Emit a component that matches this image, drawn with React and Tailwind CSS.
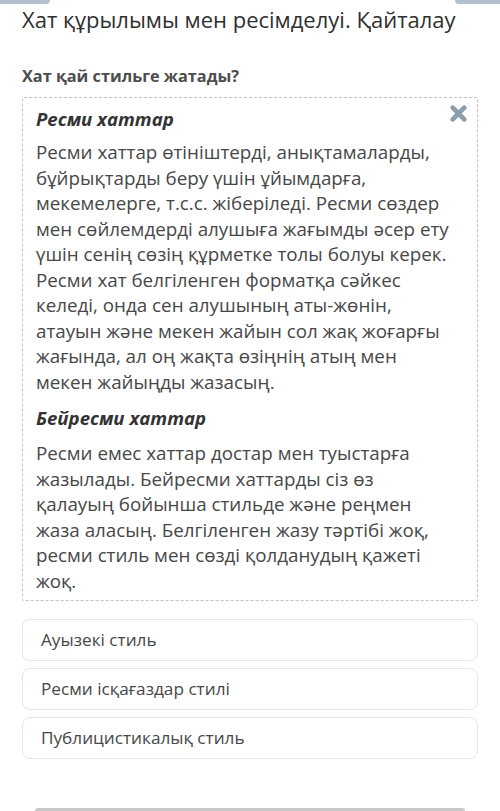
import React from 'react';

const formalLines = [
  'Ресми хаттар өтініштерді, анықтамаларды,',
  'бұйрықтарды беру үшін ұйымдарға,',
  'мекемелерге, т.с.с. жіберіледі. Ресми сөздер',
  'мен сөйлемдерді алушыға жағымды әсер ету',
  'үшін сенің сөзің құрметке толы болуы керек.',
  'Ресми хат белгіленген форматқа сәйкес',
  'келеді, онда сен алушының аты-жөнін,',
  'атауын және мекен жайын сол жақ жоғарғы',
  'жағында, ал оң жақта өзіңнің атың мен',
  'мекен жайыңды жазасың.',
];

const informalLines = [
  'Ресми емес хаттар достар мен туыстарға',
  'жазылады. Бейресми хаттарды сіз өз',
  'қалауың бойынша стильде және реңмен',
  'жаза аласың. Белгіленген жазу тәртібі жоқ,',
  'ресми стиль мен сөзді қолданудың қажеті',
  'жоқ.',
];

const options = ['Ауызекі стиль', 'Ресми ісқағаздар стилі', 'Публицистикалық стиль'];

const CloseIcon = () => (
  <svg width="19" height="19" viewBox="0 0 18 18" fill="none">
    <path d="M3.5 3.5 L14.5 14.5 M14.5 3.5 L3.5 14.5" stroke="#8c9dae" strokeWidth="4.5" strokeLinecap="round" />
  </svg>
);

const Lines = ({ lines, className }) => (
  <p className={className}>
    {lines.map((l, i) => (
      <span key={i} className="block whitespace-nowrap">
        {l}
      </span>
    ))}
  </p>
);

export default function App() {
  return (
    <div className="w-[500px] h-[811px] bg-white overflow-hidden flex flex-col text-[#333]" style={{ fontFamily: '"Open Sans", "Noto Sans", sans-serif' }}>
      <div className="flex justify-between h-[4px]">
        <div className="w-[50px] h-[4px] bg-[#b4c0cb] rounded-br-md" />
        <div className="w-[45px] h-[4px] bg-[#b4c0cb] rounded-bl-md" />
      </div>
      <h1 className="px-[22px] text-[22px] leading-[30px] text-[#2f2f2f]">Хат құрылымы мен ресімделуі. Қайталау</h1>

      <h2 className="px-[22px] mt-[31px] text-[16.3px] leading-[22px] font-bold text-[#4d4d4d]">Хат қай стильге жатады?</h2>

      <div className="mx-[22px] mt-[10px] h-[504px] border border-dashed border-[#c4c4c4] rounded-[2px] relative pl-[13px] pr-[12px] pt-[9px]">
        <div className="absolute right-[9px] top-[6px]">
          <CloseIcon />
        </div>
        <h3 className="text-[18.6px] leading-[24px] font-bold italic text-[#333]">Ресми хаттар</h3>
        <Lines lines={formalLines} className="mt-[9px] text-[18.8px] leading-[25.5px] text-[#474747]" />
        <h3 className="mt-[11px] text-[18.6px] leading-[24px] font-bold italic text-[#333]">Бейресми хаттар</h3>
        <Lines lines={informalLines} className="mt-[11px] text-[18.8px] leading-[25.5px] text-[#474747]" />
      </div>

      <div className="mx-[22px] mt-[18px] flex flex-col gap-[7px]">
        {options.map((o) => (
          <div key={o} className="h-[42px] border border-[#e6e6e6] rounded-[8px] flex items-center px-[18px] text-[17.2px] text-[#474747]">
            {o}
          </div>
        ))}
      </div>

      <div className="flex-1" />
      <div className="mx-[35px] h-[3px] bg-[#c8c8c8] rounded-t-[4px]" />
    </div>
  );
}
